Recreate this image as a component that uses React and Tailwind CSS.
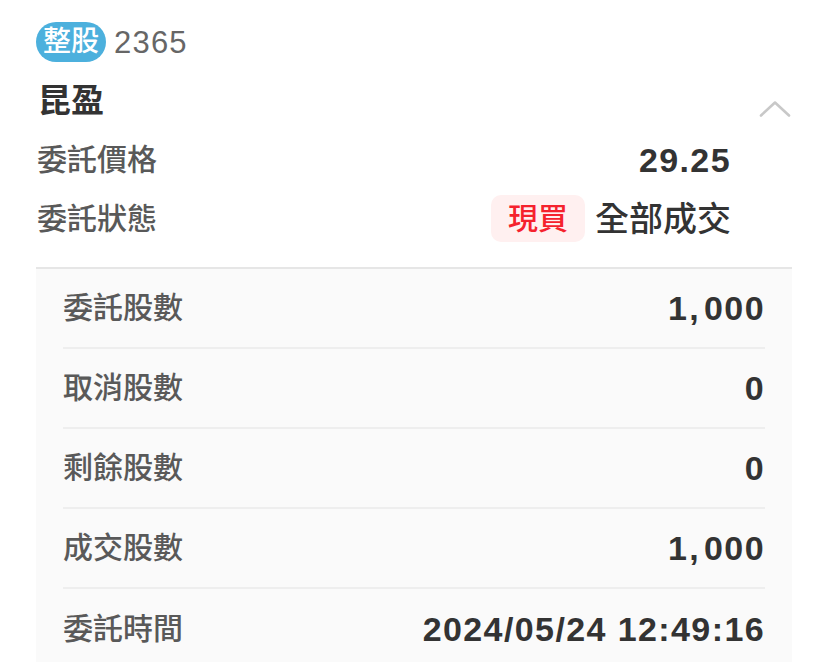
const FONT = { fontFamily: '"Liberation Sans", "Noto Sans CJK TC", sans-serif' };

const details = [
  { label: '委託股數', value: '1,000' },
  { label: '取消股數', value: '0' },
  { label: '剩餘股數', value: '0' },
  { label: '成交股數', value: '1,000' },
  { label: '委託時間', value: '2024/05/24 12:49:16' },
];

const ChevronUp = () => (
  <svg width="32" height="17" viewBox="0 0 32 17" fill="none">
    <path d="M2 15.5 L16 2.5 L30 15.5" stroke="#c8c8c8" strokeWidth="2.6" strokeLinecap="round" strokeLinejoin="round" />
  </svg>
);

// the app's font sets a wider comma than Arial does
const Num = ({ value }) => {
  const parts = value.split(',');
  return parts.map((p, i) => (
    <span key={i}>
      {i > 0 && <span className="ml-[1px] mr-[4px]">,</span>}
      {p}
    </span>
  ));
};

export default function App() {
  return (
    <div className="min-h-screen bg-white px-[36px] text-[#333]" style={FONT}>
      <div className="flex">
        <div className="flex-1 pt-[22px]">
          <div className="flex h-[40px] items-center gap-[8px]">
            <span className="flex h-[40px] w-[70px] items-center justify-center rounded-full bg-[#4cb0dd] text-[28px] font-medium leading-none text-white">
              整股
            </span>
            <span className="text-[31px] leading-none tracking-[1.2px] text-[#666]">2365</span>
          </div>
          <div className="flex h-[76px] items-center">
            <h1 className="pl-[2px] text-[33px] font-bold leading-none text-[#333]">昆盈</h1>
          </div>
          <div className="flex h-[44px] items-center justify-between">
            <span className="pl-[1px] text-[30px] font-medium leading-none text-[#595959]">委託價格</span>
            <span className="text-[34px] font-bold leading-none tracking-[1.4px] text-[#333]">29.25</span>
          </div>
          <div className="mt-[13px] flex h-[47px] items-center justify-between">
            <span className="pl-[1px] text-[30px] font-medium leading-none text-[#595959]">委託狀態</span>
            <div className="flex items-center gap-[10px]">
              <span className="flex h-[47px] items-center rounded-[10px] bg-[#fff0f0] px-[17px] text-[30px] font-medium leading-none text-[#f5222d]">
                現買
              </span>
              <span className="text-[34px] font-medium leading-none text-[#333]">全部成交</span>
            </div>
          </div>
          <div className="h-[25px]" />
        </div>
        <div className="flex w-[61px] justify-end pr-[1px]">
          <button type="button" className="mt-[100px] h-[17px]">
            <ChevronUp />
          </button>
        </div>
      </div>

      <div className="border-t-2 border-[#e6e6e6] bg-[#fafafa] px-[27px] pb-[20px]">
        {details.map((d, i) => (
          <div
            key={d.label}
            className={`flex h-[80px] items-center justify-between ${i < details.length - 1 ? 'border-b-2 border-[#eeeeee]' : ''}`}
          >
            <span className="text-[30px] font-medium leading-none text-[#595959]">{d.label}</span>
            <span className="text-[34px] font-bold leading-none tracking-[1.4px] text-[#333]">
              <Num value={d.value} />
            </span>
          </div>
        ))}
      </div>
    </div>
  );
}
